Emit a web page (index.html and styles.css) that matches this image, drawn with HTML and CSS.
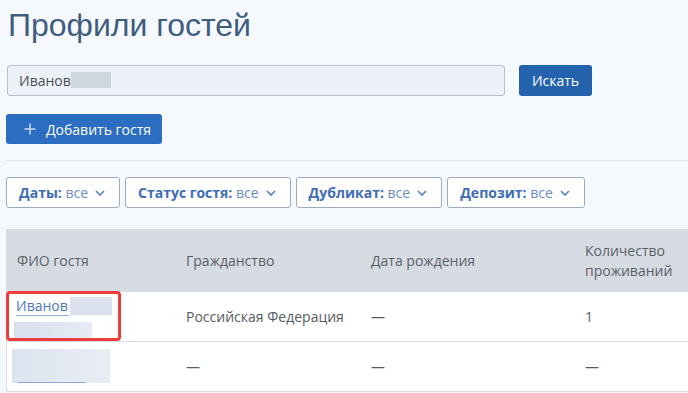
FILE: index.html
```html
<!DOCTYPE html>
<html lang="ru">
<head>
<meta charset="utf-8">
<title>Профили гостей</title>
<link rel="stylesheet" href="styles.css">
</head>
<body>
<div class="page">
  <h1 class="title">Профили гостей</h1>
  <div class="search-row">
    <div class="search-input"><span class="search-text">Иванов</span><span class="blur blur-search"></span></div>
    <button class="btn btn-search">Искать</button>
  </div>
  <button class="btn btn-add">
    <svg class="plus" width="12" height="12" viewBox="0 0 12 12"><path d="M6 0.5V11.5M0.5 6H11.5" stroke="#c9d8ee" stroke-width="1.6" fill="none"/></svg>
    <span>Добавить гостя</span>
  </button>
  <div class="divider"></div>
  <div class="filters">
    <div class="filter"><span class="ftext"><b>Даты:</b> <span class="val">все</span></span><svg class="chev" width="10" height="6" viewBox="0 0 10 6"><path d="M1 1L5 5L9 1" stroke="#5b82c2" stroke-width="1.7" fill="none"/></svg></div>
    <div class="filter"><span class="ftext"><b>Статус гостя:</b> <span class="val">все</span></span><svg class="chev" width="10" height="6" viewBox="0 0 10 6"><path d="M1 1L5 5L9 1" stroke="#5b82c2" stroke-width="1.7" fill="none"/></svg></div>
    <div class="filter"><span class="ftext"><b>Дубликат:</b> <span class="val">все</span></span><svg class="chev" width="10" height="6" viewBox="0 0 10 6"><path d="M1 1L5 5L9 1" stroke="#5b82c2" stroke-width="1.7" fill="none"/></svg></div>
    <div class="filter"><span class="ftext"><b>Депозит:</b> <span class="val">все</span></span><svg class="chev" width="10" height="6" viewBox="0 0 10 6"><path d="M1 1L5 5L9 1" stroke="#5b82c2" stroke-width="1.7" fill="none"/></svg></div>
  </div>
  <div class="table">
    <div class="row head">
      <div class="cell">ФИО гостя</div>
      <div class="cell">Гражданство</div>
      <div class="cell">Дата рождения</div>
      <div class="cell">Количество проживаний</div>
    </div>
    <div class="row">
      <div class="cell name-cell">
        <div class="highlight">
          <div class="name-line"><a class="link">Иванов</a><span class="blur blur-a"></span></div>
          <span class="blur blur-b"></span>
        </div>
      </div>
      <div class="cell">Российская Федерация</div>
      <div class="cell">—</div>
      <div class="cell">1</div>
    </div>
    <div class="row">
      <div class="cell name-cell">
        <div class="name2"><span class="blur blur-c"></span><span class="uline"></span></div>
      </div>
      <div class="cell">—</div>
      <div class="cell">—</div>
      <div class="cell">—</div>
    </div>
  </div>
</div>
</body>
</html>
```

FILE: styles.css
```css
html, body {
  margin: 0;
  padding: 0;
  background: #f5f8fc;
  overflow: hidden;
}
body {
  font-family: "Open Sans", "Noto Sans", sans-serif;
  font-size: 14px;
  color: #555b63;
}
.page {
  padding: 0 0 0 6px;
  width: 688px;
}
.title {
  margin: 0;
  padding: 5px 0 0 2px;
  height: 63px;
  box-sizing: border-box;
  font-family: "Liberation Sans", Arial, sans-serif;
  font-weight: normal;
  font-size: 32px;
  line-height: 40px;
  color: #3f5d7f;
}
.search-row {
  display: flex;
  align-items: center;
  gap: 14px;
  height: 34px;
}
.search-input {
  width: 498px;
  height: 31px;
  margin-left: 1px;
  box-sizing: border-box;
  border: 1px solid #b7c0cc;
  border-radius: 3px;
  background: #ecf1f8;
  display: flex;
  align-items: center;
  padding-left: 11px;
  color: #4b4f55;
}
.blur {
  display: inline-block;
  background: #d0d6df;
}
.blur-search {
  width: 40px;
  height: 16px;
}
.btn {
  border: none;
  border-radius: 3px;
  font-family: "Open Sans", "Noto Sans", sans-serif;
  font-size: 14px;
  color: #ffffff;
  cursor: pointer;
}
.btn-search {
  width: 73px;
  height: 31px;
  background: #2462ad;
  padding: 0;
}
.btn-add {
  margin-top: 17px;
  width: 156px;
  height: 30px;
  background: #2b6dc0;
  display: flex;
  align-items: center;
  padding: 0 0 0 18px;
  gap: 10px;
}
.plus {
  display: block;
}
.divider {
  margin-top: 16px;
  height: 1px;
  background: #dfe5ee;
  width: 700px;
}
.filters {
  display: flex;
  gap: 5px;
  margin-top: 16px;
}
.filter {
  height: 31px;
  box-sizing: border-box;
  border: 1px solid #9eabbf;
  border-radius: 3px;
  background: #ffffff;
  display: flex;
  align-items: center;
  padding: 0 14px 0 12px;
  color: #3f6db5;
  white-space: pre;
}
.filter b {
  font-weight: 700;
}
.val {
  color: #6b8cc4;
}
.chev {
  margin-left: 7px;
  display: block;
}
.table {
  margin-top: 21px;
  width: 690px;
}
.row {
  display: grid;
  grid-template-columns: 169px 185px 214px 122px;
  background: #ffffff;
  border-bottom: 1px solid #d9dde3;
  height: 49px;
  box-sizing: content-box;
  border-left: 1px solid #dde1e6;
}
.row.head {
  background: #d7dce3;
  height: 63px;
  border-bottom: none;
  border-left: none;
  padding-left: 1px;
}
.cell {
  display: flex;
  align-items: center;
  padding: 0 10px;
  line-height: 20px;
}
.head .cell {
  color: #5b6068;
}
.name-cell {
  position: relative;
  padding: 0;
}
.highlight {
  position: absolute;
  left: -1px;
  top: -1px;
  width: 115px;
  height: 50px;
  box-sizing: border-box;
  border: 3px solid #ee3b3b;
  border-radius: 4px;
  padding: 3px 0 0 7px;
}
.name-line {
  display: flex;
  align-items: flex-start;
  height: 22px;
}
.link {
  color: #4d78bb;
  border-bottom: 1px solid #8fabdc;
  line-height: 18px;
  padding-right: 1px;
}
.blur-a {
  width: 42px;
  height: 18px;
  margin-left: 1px;
  background: #dbe2ee;
}
.blur-b {
  display: block;
  margin-left: -2px;
  margin-top: 3px;
  width: 78px;
  height: 16px;
  background: linear-gradient(90deg, #d8e0ec, #e6ebf3);
}
.name2 {
  position: relative;
  margin-left: 5px;
  width: 98px;
  height: 35px;
}
.blur-c {
  width: 98px;
  height: 34px;
  background: linear-gradient(90deg, #dde4ef, #e9edf4);
}
.uline {
  position: absolute;
  left: 5px;
  top: 33px;
  width: 69px;
  height: 1px;
  background: #8fabdc;
}
```
